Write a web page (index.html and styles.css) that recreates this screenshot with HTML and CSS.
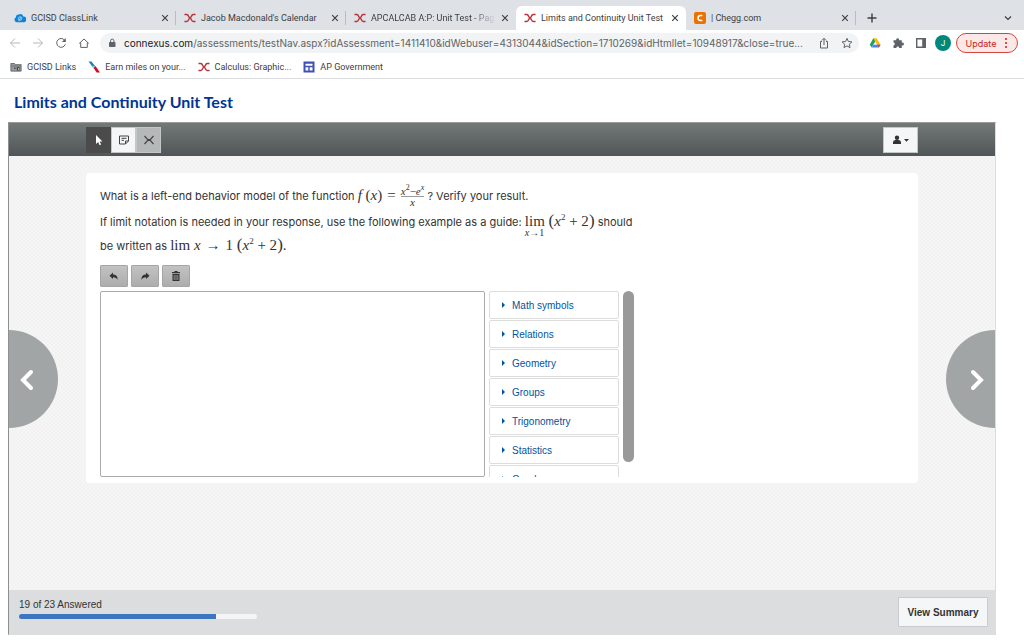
FILE: index.html
```html
<!DOCTYPE html>
<html lang="en">
<head>
  <meta charset="UTF-8" />
  <title>Limits and Continuity Unit Test</title>
  <link rel="stylesheet" href="styles.css">
</head>
<body>
  <svg class="defs" aria-hidden="true">
    <symbol id="connexus" viewBox="-0.5 -1 13 12">
      <path d="M0 1.2H2.6C4.6 1.2 4.6 5 6 5S7.4 1.2 9.4 1.2H12M0 8.8H2.6C4.6 8.8 4.6 5 6 5S7.4 8.8 9.4 8.8H12" fill="none" stroke="#b8343c" stroke-width="1.6"/>
    </symbol>
    <symbol id="close" viewBox="0 0 8 8">
      <path d="M1.2 1.2L6.8 6.8M6.8 1.2L1.2 6.8" fill="none" stroke="#3c4043" stroke-width="1.2"/>
    </symbol>
  </svg>

  <header class="browser">
    <div class="tabs">
      <div class="tab">
        <svg class="favicon" viewBox="0 0 12 10"><path d="M3 9.3A2.7 2.7 0 0 1 2 4.2 2.8 2.8 0 0 1 5 1.4 3.3 3.3 0 0 1 9.3 3.4 2.9 2.9 0 0 1 9.5 9.3Z" fill="#0b84d8"/><circle cx="6" cy="5.5" r="1.7" fill="none" stroke="#bfe3fa" stroke-width=".8"/><path d="M4.5 8L7.5 3.8" stroke="#bfe3fa" stroke-width=".7"/></svg>
        <span class="tab-title">GCISD ClassLink</span>
        <button class="tab-close" aria-label="Close tab"><svg><use href="#close"/></svg></button>
      </div>
      <div class="tab">
        <svg class="favicon"><use href="#connexus"/></svg>
        <span class="tab-title">Jacob Macdonald's Calendar</span>
        <button class="tab-close" aria-label="Close tab"><svg><use href="#close"/></svg></button>
      </div>
      <div class="tab before-active">
        <svg class="favicon"><use href="#connexus"/></svg>
        <span class="tab-title">APCALCAB A:P: Unit Test - Pag</span>
        <button class="tab-close" aria-label="Close tab"><svg><use href="#close"/></svg></button>
      </div>
      <div class="tab active">
        <svg class="favicon"><use href="#connexus"/></svg>
        <span class="tab-title">Limits and Continuity Unit Test</span>
        <button class="tab-close" aria-label="Close tab"><svg><use href="#close"/></svg></button>
      </div>
      <div class="tab">
        <svg class="favicon" viewBox="0 0 12 12"><rect width="12" height="12" rx="2" fill="#eb7100"/><path d="M8.4 3.5H6.5A2.5 2.5 0 0 0 6.5 8.5H8.4" fill="none" stroke="#fff" stroke-width="1.5"/></svg>
        <span class="tab-title">| Chegg.com</span>
        <button class="tab-close" aria-label="Close tab"><svg><use href="#close"/></svg></button>
      </div>
      <button class="new-tab" aria-label="New tab"><svg viewBox="0 0 10 10"><path d="M5 .5V9.5M.5 5H9.5" stroke="#3c4043" stroke-width="1.4"/></svg></button>
      <button class="tab-search" aria-label="Search tabs"><svg viewBox="0 0 8 8"><path d="M1 2.5L4 5.5 7 2.5" fill="none" stroke="#3c4043" stroke-width="1.2"/></svg></button>
    </div>

    <div class="toolbar">
      <button class="nav off" aria-label="Back"><svg viewBox="0 0 12 12"><path d="M11 6H1.5M6 1.5L1.5 6 6 10.5"/></svg></button>
      <button class="nav off" aria-label="Forward"><svg viewBox="0 0 12 12"><path d="M1 6H10.5M6 1.5L10.5 6 6 10.5"/></svg></button>
      <button class="nav" aria-label="Reload"><svg viewBox="0 0 12 12"><path d="M10 3.8A4.4 4.4 0 1 0 10.3 7.3"/><path d="M10.8 1V5H6.8Z" fill="#5f6368" stroke="none"/></svg></button>
      <button class="nav" aria-label="Home"><svg viewBox="0 0 12 12"><path d="M1.2 6.5L6 2 10.8 6.5M2.7 5.5V10.4H9.3V5.5"/></svg></button>
      <div class="omnibox">
        <svg class="lock" viewBox="0 0 8 10"><rect x="1" y="4" width="6.5" height="5" rx=".8" fill="#5f6368"/><path d="M2.6 4V2.7A1.6 1.6 0 0 1 5.9 2.7V4" fill="none" stroke="#5f6368"/></svg>
        <div class="url"><b>connexus.com</b>/assessments/testNav.aspx?idAssessment=1411410&amp;idWebuser=4313044&amp;idSection=1710269&amp;idHtmllet=10948917&amp;close=true...</div>
        <button class="nav" aria-label="Share"><svg viewBox="0 0 12 12"><path d="M4 4.5H2.5V11H9.5V4.5H8M6 8V1.5M3.8 3.5L6 1.3 8.2 3.5"/></svg></button>
        <button class="nav" aria-label="Bookmark"><svg viewBox="0 0 12 12"><path d="M6 1.4L7.4 4.5 10.9 4.9 8.3 7.2 9 10.6 6 8.9 3 10.6 3.7 7.2 1.1 4.9 4.6 4.5Z"/></svg></button>
      </div>
      <div class="extensions">
        <button aria-label="Drive"><svg viewBox="0 0 12 12"><path d="M4.3 1.3H4.7L6.4 4.3 2.7 10.5 .7 7.8Z" fill="#1fa463"/><path d="M4.5 1.3H7.7L11.5 7.9H8.2Z" fill="#fbbc04"/><path d="M2.7 10.5L4.4 7.7H11.5L9.9 10.5Z" fill="#4285f4"/><path d="M8.2 7.7H11.5L9.9 10.5Z" fill="#ea4335"/></svg></button>
        <button aria-label="Extensions"><svg viewBox="0 0 12 12"><path d="M1.5 3.2H4.2A1.5 1.5 0 1 1 7.1 3.2H9.8V5.7A1.5 1.5 0 1 1 9.8 8.4V11H7.2A1.4 1.4 0 0 0 4.4 11H1.5V8.2A1.3 1.3 0 0 0 1.5 5.6Z" fill="#5f6368"/></svg></button>
        <button aria-label="Side panel"><svg viewBox="0 0 12 12"><path d="M1.7 1.7H10.3V10.3H1.7Z" fill="none" stroke="#5f6368" stroke-width="1.4"/><path d="M7.2 1H11V11H7.2Z" fill="#5f6368"/></svg></button>
      </div>
      <button class="avatar">J</button>
      <button class="update">Update <svg viewBox="0 0 4 12"><circle cx="2" cy="2" r="1"/><circle cx="2" cy="6" r="1"/><circle cx="2" cy="10" r="1"/></svg></button>
    </div>

    <nav class="bookmarks">
      <a href="#"><svg viewBox="0 0 12 12"><path d="M.5 2H4.5L5.5 3.2H11.5V10.5H.5Z" fill="#9a9c9f"/><path d="M1 2.5H4.5L5.5 3.7H11V10H1V2.5M1 5H11" fill="none" stroke="#66696c" stroke-width=".8"/><path d="M4 6.5H5.5V8H4ZM6.8 6H9.5V9.5H6.8Z" fill="#45484c"/><path d="M8 7H8.7V9H8Z" fill="#ddd"/></svg>GCISD Links</a>
      <a href="#"><svg viewBox="0 0 12 12"><path d="M.5 .5H3.5L7 5 5.3 7Z" fill="#1583c4"/><path d="M5.5 6.8L7.5 5 12 11.5H8.6Z" fill="#c8102e"/><path d="M4 4.5L7 5.2 5.4 7.5Z" fill="#a9bcc9"/></svg>Earn miles on your...</a>
      <a href="#"><svg><use href="#connexus"/></svg>Calculus: Graphic...</a>
      <a href="#"><svg viewBox="0 0 12 12"><path d="M.5 .5H11.5V11.5H.5Z" fill="#3f51b5"/><path d="M2.5 2.7H9.5V4.8H2.5ZM2.5 6.2H5.3V9.5H2.5ZM6.7 6.2H9.5V9.5H6.7Z" fill="#fff"/></svg>AP Government</a>
    </nav>
  </header>

  <h1>Limits and Continuity Unit Test</h1>

  <main class="frame">
    <div class="test-bar">
      <div class="tools">
        <button class="tool pointer" aria-label="Pointer"><svg viewBox="0 0 12 12"><path d="M3 1V10L5.2 8 6.6 11.3 8.1 10.6 6.7 7.5H9.5Z" fill="#fff"/></svg></button>
        <button class="tool" aria-label="Notes"><svg viewBox="0 0 12 12"><path d="M1.5 2H10.5V7L7.5 10H1.5ZM7.5 10V7H10.5M3.5 4.3H8.5M3.5 6.3H6" fill="none" stroke="#444"/></svg></button>
        <button class="tool eliminate" aria-label="Eliminate"><svg viewBox="0 0 12 12"><path d="M1.5 2L4.8 5.7H7.2L10.5 2M1.5 10L4.8 6.3H7.2L10.5 10" fill="none" stroke="#444" stroke-width="1.2"/></svg></button>
      </div>
      <button class="user" aria-label="User menu"><svg viewBox="0 0 18 10"><circle cx="5" cy="2.8" r="2.2"/><path d="M1 9V7.3Q1 5.5 3.4 5H6.6Q9 5.5 9 7.3V9ZM12 4H17L14.5 6.8Z"/></svg></button>
    </div>

    <div class="stage">
      <section class="question">
        <p>What is a left-end behavior model of the function <span class="math"><i>f</i> (<i>x</i>)<span class="op">=</span><span class="frac"><span><i>x</i><sup>2</sup>−<i>e</i><sup><i>x</i></sup></span><span><i>x</i></span></span></span> ? Verify your result.</p>
        <p>If limit notation is needed in your response, use the following example as a guide: <span class="math"><span class="lim">lim<small><i>x</i>→1</small></span> <span class="paren">(</span><i>x</i><sup>2</sup> + 2<span class="paren">)</span></span> should be written as <span class="math">lim <i>x</i><span class="op">→</span>1 <span class="paren">(</span><i>x</i><sup>2</sup> + 2<span class="paren">)</span>.</span></p>

        <div class="edit-buttons">
          <button aria-label="Undo"><svg viewBox="0 0 12 12"><path d="M5 2.5V4.5Q10 4.5 9.5 10 8.5 7.2 5 7.2V9L1.5 5.8Z"/></svg></button>
          <button aria-label="Redo"><svg viewBox="0 0 12 12"><path d="M7 2.5V4.5Q2 4.5 2.5 10 3.5 7.2 7 7.2V9L10.5 5.8Z"/></svg></button>
          <button aria-label="Clear"><svg viewBox="0 0 12 12"><path d="M4.5 2V1H7.5V2H10V3.2H2V2ZM2.5 4H9.5V11H2.5Z"/><path d="M4.2 5V10M6 5V10M7.8 5V10" stroke="#bbb" stroke-width=".7"/></svg></button>
        </div>

        <div class="editor">
          <textarea aria-label="Your response"></textarea>
          <div class="palette">
            <button>Math symbols</button>
            <button>Relations</button>
            <button>Geometry</button>
            <button>Groups</button>
            <button>Trigonometry</button>
            <button>Statistics</button>
            <button>Greek</button>
          </div>
          <div class="scroll-thumb"></div>
        </div>
      </section>
      <button class="page-turn prev" aria-label="Previous"><svg viewBox="0 0 14 22"><path d="M11 3L3 11 11 19"/></svg></button>
      <button class="page-turn next" aria-label="Next"><svg viewBox="0 0 14 22"><path d="M3 3L11 11 3 19"/></svg></button>
    </div>

    <footer>
      <div class="progress">
        <span id="answered">19 of 23 Answered</span>
        <div class="track" role="progressbar" aria-labelledby="answered" aria-valuenow="19" aria-valuemax="23"><div class="fill" style="width: 82.6%"></div></div>
      </div>
      <button class="summary">View Summary</button>
    </footer>
  </main>
</body>
</html>
```
FILE: styles.css
```css
* {
  box-sizing: border-box;
}

body {
  margin: 0;
  min-height: 100vh;
  display: flex;
  flex-direction: column;
  background: #fff;
  color: #333;
  font-family: "Liberation Sans", Arial, sans-serif;
  font-size: 10px;
}

button {
  font: inherit;
  color: inherit;
  background: none;
  border: none;
  padding: 0;
  display: flex;
  align-items: center;
  justify-content: center;
  cursor: pointer;
}

svg {
  display: block;
  flex: none;
  width: 12px;
  height: 12px;
}

.defs {
  position: absolute;
  width: 0;
  height: 0;
}

/* browser */
.browser {
  font-family: Inter, Roboto, sans-serif;
  color: #3c4043;
  border-bottom: 1px solid #dadce0;
}

.tabs {
  display: flex;
  height: 30px;
  padding: 6px 12px 0 6px;
  background: #dee1e6;
}

.tab {
  flex: 0 1 170px;
  min-width: 0;
  display: flex;
  align-items: center;
  gap: 5px;
  padding: 0 7px 0 8px;
  font-family: Roboto, sans-serif;
  font-size: 9px;
  position: relative;
}

.tab::after {
  content: "";
  position: absolute;
  right: 0;
  top: 5px;
  height: 14px;
  border-right: 1px solid #b9bcc0;
}

.tab.active {
  background: #fff;
  border-radius: 6px 6px 0 0;
}

.tab.active::after,
.tab.before-active::after {
  display: none;
}

.tab-title {
  flex: 1;
  overflow: hidden;
  white-space: nowrap;
}

.before-active .tab-title {
  mask-image: linear-gradient(to right, #000 80%, transparent);
}

.tab-close svg {
  width: 8px;
  height: 8px;
}

.new-tab {
  margin-left: 11px;
}

.new-tab svg {
  width: 10px;
  height: 10px;
}

.tab-search {
  margin-left: auto;
}

.tab-search svg {
  width: 8px;
  height: 8px;
}

.toolbar {
  display: flex;
  align-items: center;
  height: 26px;
  padding: 0 6px 0 3px;
}

.nav {
  width: 23px;
  flex: none;
}

.nav svg {
  fill: none;
  stroke: #5f6368;
}

.nav.off svg {
  stroke: #b4b7ba;
}

.omnibox {
  flex: 1;
  min-width: 0;
  height: 20px;
  display: flex;
  align-items: center;
  margin: 0 10px 0 5px;
  padding: 0 1px 0 8px;
  border-radius: 10px;
  background: #f1f3f4;
}

.lock {
  width: 8px;
  height: 10px;
}

.url {
  flex: 1;
  margin-left: 8px;
  overflow: hidden;
  white-space: nowrap;
  color: #5f6368;
}

.url b {
  font-weight: 400;
  color: #202124;
}

.extensions {
  display: flex;
  gap: 11px;
  margin-right: 8px;
}

.avatar {
  width: 16px;
  height: 16px;
  margin-right: 5px;
  border-radius: 50%;
  background: #00897b;
  color: #fff;
  font-size: 8px;
}

.update {
  width: 62px;
  height: 20px;
  gap: 8px;
  border: 1px solid #d3453b;
  border-radius: 10px;
  background: #fce8e6;
  color: #c5221f;
  font-size: 9px;
}

.update svg {
  width: 4px;
  fill: #c5221f;
}

.bookmarks {
  display: flex;
  gap: 12px;
  height: 22px;
  padding: 0 10px 1px;
  font-family: Roboto, sans-serif;
  font-size: 9px;
}

.bookmarks a {
  display: flex;
  align-items: center;
  gap: 5px;
  color: inherit;
  text-decoration: none;
}

/* test */
h1 {
  margin: 12px 14px 10px;
  font: 700 16px/21px Lato, sans-serif;
  color: #003594;
}

.frame {
  flex: 1;
  display: flex;
  flex-direction: column;
  margin: 0 28px 5px 8px;
  border: 1px solid #dcdddd;
  border-top-color: #999;
  border-left-color: #8e9090;
}

.test-bar {
  display: flex;
  justify-content: space-between;
  align-items: center;
  height: 33px;
  padding: 0 77px;
  background: linear-gradient(#737978, #505657);
}

.tools {
  display: flex;
}

.tool,
.user {
  width: 25px;
  height: 26px;
  background: #f5f6f8;
  border: 1px solid #c4c7c8;
}

.tool.pointer {
  background: #4b4b4b;
  border-color: #4b4b4b;
}

.tool.eliminate {
  background: #b5b8b8;
}

.user {
  width: 35px;
}

.user svg {
  width: 18px;
  height: 10px;
  fill: #333;
}

.stage {
  flex: 1;
  position: relative;
  padding: 17px 77px;
  background: conic-gradient(#f2f2f2 25%, #f5f5f5 0 50%, #f2f2f2 0 75%, #f5f5f5 0) 0 0 / 4px 4px;
}

.question {
  min-height: 310px;
  padding: 11px 14px 6px;
  border-radius: 4px;
  background: #fff;
}

.question p {
  max-width: 542px;
  margin: 0 0 2px;
  font-family: Inter, "Liberation Sans", sans-serif;
  font-size: 11px;
  line-height: 24px;
}

.math {
  font-family: "Liberation Serif", serif;
  font-size: 15px;
  line-height: 20px;
  white-space: nowrap;
}

.math sup {
  font-size: 9px;
  line-height: 0;
}

.op {
  margin: 0 5px;
}

.paren {
  font-size: 17px;
  line-height: 0;
}

.frac {
  display: inline-flex;
  flex-direction: column;
  align-items: center;
  vertical-align: middle;
  font-size: 11px;
  line-height: 10px;
}

.frac sup {
  font-size: 8px;
}

.frac span + span {
  align-self: stretch;
  border-top: 1px solid #999;
  text-align: center;
}

.lim {
  position: relative;
}

.lim small {
  position: absolute;
  left: 0;
  top: 15px;
  font-size: 10px;
  line-height: 10px;
}

.edit-buttons {
  display: flex;
  gap: 3px;
  margin: 7px 0 4px;
}

.edit-buttons button {
  width: 28px;
  height: 22px;
  border: 1px solid #a5a5a5;
  border-radius: 1px;
  background: linear-gradient(#c2c2c2, #adadad);
}

.edit-buttons svg {
  fill: #333;
}

.editor {
  display: flex;
  gap: 4px;
  height: 186px;
}

.editor textarea {
  flex: 0 1 385px;
  min-width: 0;
  border: 1px solid #aaa;
  border-radius: 2px;
  resize: none;
}

.palette {
  width: 130px;
  overflow: hidden;
}

.palette button {
  width: 100%;
  height: 28px;
  margin-bottom: 1px;
  padding-left: 12px;
  justify-content: flex-start;
  border: 1px solid #ddd;
  border-radius: 2px;
  color: #00549f;
}

.palette button::before {
  content: "";
  margin-right: 7px;
  border: 3px solid transparent;
  border-left-color: #00549f;
  border-right-width: 0;
}

.scroll-thumb {
  width: 11px;
  height: 171px;
  border-radius: 6px;
  background: #999;
}

.page-turn {
  position: absolute;
  top: 174px;
  width: 49px;
  height: 98px;
  padding-top: 2px;
  background: #a1a5a5;
}

.page-turn svg {
  width: 14px;
  height: 22px;
  fill: none;
  stroke: #fff;
  stroke-width: 4;
  stroke-linecap: round;
}

.prev {
  left: 0;
  padding-right: 14px;
  border-radius: 0 49px 49px 0;
}

.next {
  right: 0;
  padding-left: 12px;
  border-radius: 49px 0 0 49px;
}

footer {
  display: flex;
  justify-content: space-between;
  align-items: center;
  height: 44px;
  padding: 0 7px 0 10px;
  background: #dcddde;
}

.progress {
  width: 238px;
  padding-bottom: 6px;
}

.track {
  height: 5px;
  margin-top: 4px;
  overflow: hidden;
  border-radius: 3px;
  background: #f5f5f5;
}

.fill {
  height: 100%;
  background: #3c76bf;
}

.summary {
  width: 90px;
  height: 30px;
  border: 1px solid #c8cacc;
  border-radius: 1px;
  background: #f5f6f8;
  font-weight: 700;
}
```
